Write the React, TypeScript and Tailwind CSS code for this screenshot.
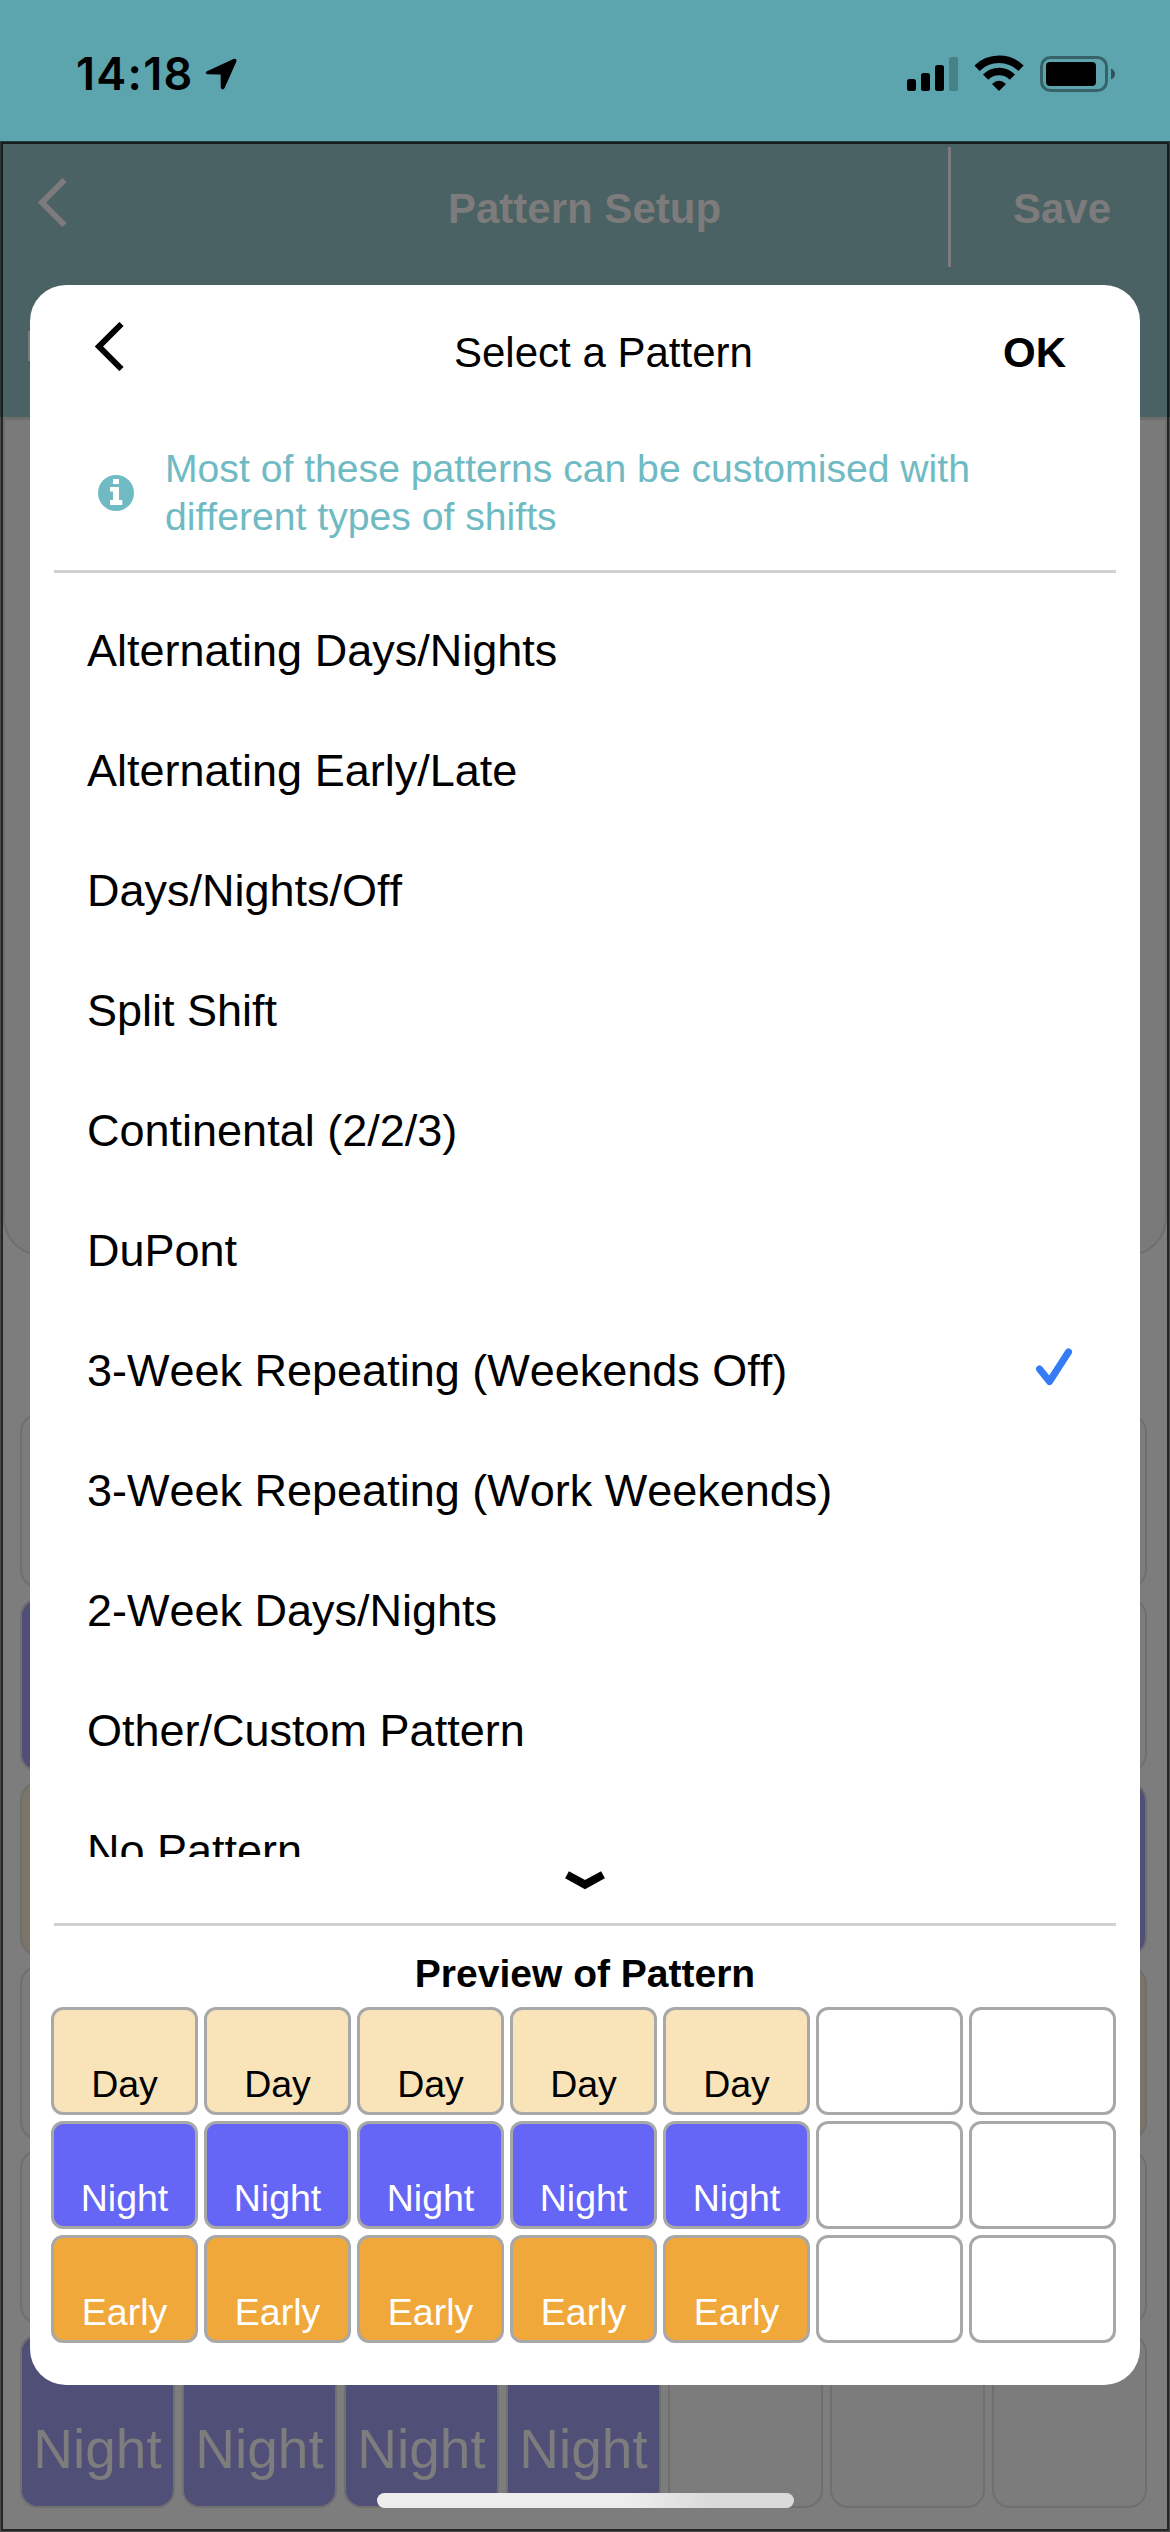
import React from 'react';

type Shift = 'day' | 'night' | 'early' | 'off';

interface CellProps {
  shift: Shift;
  label?: string;
}

const patterns = [
  'Alternating Days/Nights',
  'Alternating Early/Late',
  'Days/Nights/Off',
  'Split Shift',
  'Continental (2/2/3)',
  'DuPont',
  '3-Week Repeating (Weekends Off)',
  '3-Week Repeating (Work Weekends)',
  '2-Week Days/Nights',
  'Other/Custom Pattern',
  'No Pattern',
];

const selectedPattern = '3-Week Repeating (Weekends Off)';

const previewRows: Shift[][] = [
  ['day', 'day', 'day', 'day', 'day', 'off', 'off'],
  ['night', 'night', 'night', 'night', 'night', 'off', 'off'],
  ['early', 'early', 'early', 'early', 'early', 'off', 'off'],
];

const calendarRows: Shift[][] = [
  ['off', 'off', 'off', 'off', 'off', 'off', 'off'],
  ['night', 'off', 'off', 'off', 'off', 'off', 'off'],
  ['day', 'off', 'off', 'off', 'off', 'off', 'night'],
  ['off', 'off', 'off', 'off', 'off', 'off', 'day'],
  ['off', 'off', 'off', 'off', 'off', 'off', 'off'],
  ['night', 'night', 'night', 'night', 'off', 'off', 'off'],
];

const previewStyles: Record<Shift, string> = {
  day: 'bg-[#f9e4ba] text-black',
  night: 'bg-[#6565f6] text-white',
  early: 'bg-[#f1a83b] text-white',
  off: 'bg-white',
};

const calendarStyles: Record<Shift, string> = {
  day: 'bg-[#7b7568]',
  night: 'bg-[#504f78]',
  early: 'bg-[#78541d]',
  off: 'bg-[#7c7c7c]',
};

const shiftLabels: Record<Shift, string> = {
  day: 'Day',
  night: 'Night',
  early: 'Early',
  off: '',
};

const BackChevron: React.FC<{ className: string }> = ({ className }) => (
  <svg viewBox="0 0 29 49" fill="none" stroke="currentColor" strokeWidth="6" className={`w-[29px] h-[49px] ${className}`}>
    <path d="M26.5 2 L4 24.5 L26.5 47" />
  </svg>
);

const InfoIcon: React.FC = () => (
  <svg viewBox="0 0 36 36" className="w-[36px] h-[36px]">
    <circle cx="18" cy="18" r="18" fill="currentColor" />
    <rect x="15" y="4" width="6" height="5" fill="#fff" />
    <path d="M12 12 H21 V25 H24.3 V30 H12 V25 H15 V16.5 H12 Z" fill="#fff" />
  </svg>
);

const StatusBar: React.FC = () => (
  <div className="h-[141px] bg-[#5ca4ae] flex items-start text-black pt-[47px] pl-[76px] pr-[54px]">
    <span className="font-['Inter'] font-semibold text-[45px] leading-[54px] tracking-[1.3px]">14:18</span>
    <svg viewBox="0 0 32 32" className="w-[32px] h-[32px] mt-[11px] ml-[11px]">
      <path
        d="M2 13.2 L28.5 0.9 Q32 0 31.4 3.4 L19.6 30 Q17.7 32.8 15.8 30 L15.6 16.6 L2.4 16.3 Q-0.8 15 2 13.2 Z"
        fill="currentColor"
      />
    </svg>
    <svg viewBox="0 0 51 34" className="w-[51px] h-[34px] mt-[10px] ml-auto">
      <rect x="0" y="22" width="9" height="12" rx="2.5" />
      <rect x="14" y="16" width="9" height="18" rx="2.5" />
      <rect x="28" y="8" width="9" height="26" rx="2.5" />
      <rect x="42" y="0" width="9" height="34" rx="2.5" opacity="0.22" />
    </svg>
    <svg viewBox="0 0 50 36" fill="none" stroke="currentColor" strokeWidth="7.5" className="w-[50px] h-[36px] mt-[8px] ml-[16px]">
      <path d="M3 13.2 A31.5 31.5 0 0 1 47 13.2" />
      <path d="M11.6 22.1 A19 19 0 0 1 38.4 22.1" />
      <path d="M18 29 Q25 22.5 32 29 L25 36 Z" fill="currentColor" stroke="none" />
    </svg>
    <svg viewBox="0 0 76 36" className="w-[76px] h-[36px] mt-[9px] ml-[16px]">
      <rect x="1.5" y="1.5" width="65" height="33" rx="9" fill="none" stroke="#000" strokeWidth="3" opacity="0.4" />
      <rect x="6" y="6" width="50" height="24" rx="4" />
      <path d="M71 12.5 Q75 14.5 75 18 Q75 21.5 71 23.5 Z" opacity="0.5" />
    </svg>
  </div>
);

const CalendarCell: React.FC<CellProps> = ({ shift, label }) => (
  <div
    className={`h-[174px] w-[155px] rounded-[18px] border-2 border-[#6f6f6f] flex items-end justify-center pb-[29px] text-[55px] leading-[55px] text-[#7d7d7d] ${calendarStyles[shift]}`}
  >
    {label}
  </div>
);

const PreviewCell: React.FC<CellProps> = ({ shift, label }) => (
  <div
    className={`h-[108px] w-[147px] rounded-[12px] border-[3px] border-[#a8a8a8] flex items-end justify-center pb-[9px] text-[37.5px] leading-none ${previewStyles[shift]}`}
  >
    {label}
  </div>
);

const SetupScreen: React.FC = () => (
  <div className="h-[2391px] bg-[#7d7d7d] text-[#7d7b7b]">
    {/* Header */}
    <div className="h-[276px] bg-[#4a6263] pt-[3px]">
      <div className="h-[128px] flex text-[42px] leading-[130px] font-bold">
        <BackChevron className="mt-[34px] ml-[38px]" />
        <div className="w-[881px] pl-[381px]">Pattern Setup</div>
        <div className="w-[3px] h-[120px] mt-[3px] bg-[#7d7b7b]" />
        <div className="pl-[62px]">Save</div>
      </div>
      <div className="w-[20px] h-[30px] mt-[59px] ml-[28px] bg-[#7d7b7b]" />
    </div>

    <div className="h-[839px] mx-[3px] rounded-b-[38px] border-2 border-t-[3px] border-[#6e6e6e] bg-[#7a7a7a]" />

    {/* Calendar, only the last row shows its labels below the dialog */}
    <div className="mt-[158px] ml-[20px] flex flex-col gap-[10px]">
      {calendarRows.map((row, rowIndex) => (
        <div key={rowIndex} className="flex gap-[7px]">
          {row.map((shift, index) => (
            <CalendarCell
              key={index}
              shift={shift}
              label={rowIndex === calendarRows.length - 1 ? shiftLabels[shift] : undefined}
            />
          ))}
        </div>
      ))}
    </div>
  </div>
);

const PatternDialog: React.FC = () => (
  <div className="absolute left-[30px] top-[285px] w-[1110px] h-[2100px] rounded-[36px] bg-white text-black overflow-hidden">
    <div className="h-[135px] flex text-[42px] leading-[135px]">
      <BackChevron className="mt-[37px] ml-[65px]" />
      <h1 className="ml-[330px]">Select a Pattern</h1>
      <button className="ml-auto mr-[74px] font-bold">OK</button>
    </div>

    <div className="h-[150px] pl-[68px] pb-[5px] flex items-center text-[#6fbac3]">
      <InfoIcon />
      <p className="ml-[31px] text-[39.15px] leading-[48px]">
        Most of these patterns can be customised with
        <br />
        different types of shifts
      </p>
    </div>
    <div className="h-[3px] mx-[24px] bg-[#d1d1d1]" />

    <div className="h-[1284px] pt-[18px] pl-[57px] overflow-hidden">
      {patterns.map((pattern) => (
        <div key={pattern} className="h-[120px] flex justify-between pr-[66px] text-[45px] leading-[120px] whitespace-nowrap">
          {pattern}
          {pattern === selectedPattern && (
            <svg viewBox="0 0 40 40" fill="none" stroke="#347bf6" strokeWidth="7" strokeLinecap="round" strokeLinejoin="round" className="w-[40px] h-[40px] mt-[36px]">
              <path d="M5.5 22 L15.5 34.5 L34.5 5" />
            </svg>
          )}
        </div>
      ))}
    </div>

    <div className="h-[66px] flex justify-center pt-[14px]">
      <svg viewBox="0 0 42 19" fill="none" stroke="currentColor" strokeWidth="8" className="w-[42px] h-[19px]">
        <path d="M3 3.8 L21 13.6 L39 3.8" />
      </svg>
    </div>
    <div className="h-[3px] mx-[24px] bg-[#d1d1d1]" />

    {/* Preview */}
    <h2 className="pt-[14px] text-center text-[39px] leading-[67px] font-bold">Preview of Pattern</h2>
    <div className="ml-[21px] flex flex-col gap-[6px]">
      {previewRows.map((row, rowIndex) => (
        <div key={rowIndex} className="flex gap-[6px]">
          {row.map((shift, index) => (
            <PreviewCell key={index} shift={shift} label={shiftLabels[shift]} />
          ))}
        </div>
      ))}
    </div>
  </div>
);

export default function App() {
  return (
    <div className="relative w-[1170px] h-[2532px] overflow-hidden font-['Liberation_Sans',sans-serif] [font-kerning:none]">
      <StatusBar />
      <SetupScreen />

      {/* Dimmed window frame */}
      <div className="absolute inset-x-0 top-[141px] bottom-0 border border-black/40">
        <div className="h-full border-2 border-black/70" />
      </div>

      <PatternDialog />

      {/* Home indicator */}
      <div className="absolute left-[377px] bottom-[24px] w-[417px] h-[15px] rounded-full bg-linear-to-r from-[#ededed] from-60% to-[#dadada] to-80%" />
    </div>
  );
}
